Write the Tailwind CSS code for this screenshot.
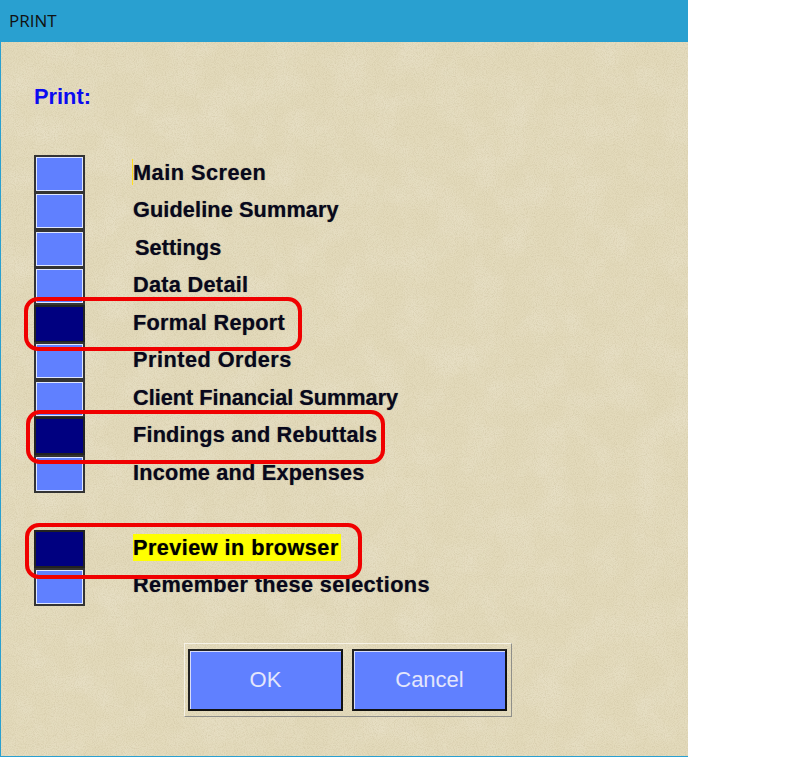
<!DOCTYPE html>
<html lang="en">
<head>
    <meta charset="UTF-8">
    <title>Print</title>
    <script src="https://cdn.jsdelivr.net/npm/@tailwindcss/browser@4"></script>
</head>
<body class="bg-white">
    <div class="w-[688px] h-[757px] flex flex-col bg-[#29a0d0] pl-px pb-px">
        <div class="h-[42px] shrink-0 pl-2 pt-[11px] text-[17px] leading-5 text-[#111] font-['Open_Sans',sans-serif]">PRINT</div>

        <div class="relative flex-1 bg-[#e3dabb] pl-[33px] font-['Liberation_Sans',sans-serif]">
            <!-- paper texture -->
            <svg class="absolute inset-0 w-full h-full" xmlns="http://www.w3.org/2000/svg">
                <filter id="blotch" x="0" y="0" width="100%" height="100%">
                    <feTurbulence type="fractalNoise" baseFrequency="0.03" numOctaves="4" seed="9"/>
                    <feColorMatrix values="0 0 0 0 0.85  0 0 0 0 0.8  0 0 0 0 0.66  0.8 0 0 0 -0.3"/>
                </filter>
                <filter id="grain" x="0" y="0" width="100%" height="100%">
                    <feTurbulence type="fractalNoise" baseFrequency="0.9" numOctaves="2" seed="4"/>
                    <feColorMatrix values="0 0 0 0 0.62  0 0 0 0 0.55  0 0 0 0 0.36  1.3 0 0 0 -0.52"/>
                </filter>
                <rect width="100%" height="100%" filter="url(#blotch)"/>
                <rect width="100%" height="100%" filter="url(#grain)"/>
            </svg>

            <div class="relative">
                <p class="pt-[43px] h-[112px] text-[21.8px] leading-6 font-bold text-[#0b0bf0]">Print:</p>

                <div class="grid grid-cols-[99px_1fr] auto-rows-[37.5px] text-[21.7px] leading-[26px] font-bold text-[#08081c] items-center [text-shadow:0_0_1px_#0008]">
                    <span class="w-[51px] h-[38px] translate-y-px border-2 border-[#333] bg-[#6080ff] outline outline-1 -outline-offset-3 outline-white/80"></span>
                    <span class="relative tracking-[0.5px]">Main Screen<i class="absolute left-[-1px] top-[-1px] w-px h-[26px] bg-yellow-300"></i></span>
                    <span class="w-[51px] h-[38px] translate-y-px border-2 border-[#333] bg-[#6080ff] outline outline-1 -outline-offset-3 outline-white/80"></span>
                    <span class="tracking-[0.12px]">Guideline Summary</span>
                    <span class="w-[51px] h-[38px] translate-y-px border-2 border-[#333] bg-[#6080ff] outline outline-1 -outline-offset-3 outline-white/80"></span>
                    <span class="pl-[2px] tracking-[0.1px]">Settings</span>
                    <span class="w-[51px] h-[38px] translate-y-px border-2 border-[#333] bg-[#6080ff] outline outline-1 -outline-offset-3 outline-white/80"></span>
                    <span class="tracking-[0.3px]">Data Detail</span>
                    <span class="w-[51px] h-[38px] translate-y-px border-2 border-[#222] bg-[#000080]"></span>
                    <span class="tracking-[0.3px]">Formal Report</span>
                    <span class="w-[51px] h-[38px] translate-y-px border-2 border-[#333] bg-[#6080ff] outline outline-1 -outline-offset-3 outline-white/80"></span>
                    <span class="tracking-[0.5px]">Printed Orders</span>
                    <span class="w-[51px] h-[38px] translate-y-px border-2 border-[#333] bg-[#6080ff] outline outline-1 -outline-offset-3 outline-white/80"></span>
                    <span>Client Financial Summary</span>
                    <span class="w-[51px] h-[38px] translate-y-px border-2 border-[#222] bg-[#000080]"></span>
                    <span class="tracking-[0.2px]">Findings and Rebuttals</span>
                    <span class="w-[51px] h-[38px] translate-y-px border-2 border-[#333] bg-[#6080ff] outline outline-1 -outline-offset-3 outline-white/80"></span>
                    <span class="tracking-[0.2px]">Income and Expenses</span>
                </div>

                <div class="mt-[37px] grid grid-cols-[99px_1fr] auto-rows-[37.5px] text-[21.7px] leading-[26px] font-bold text-[#08081c] items-center [text-shadow:0_0_1px_#0008]">
                    <span class="w-[51px] h-[38px] translate-y-[2px] border-2 border-[#222] bg-[#000080]"></span>
                    <span><span class="inline-block bg-[#ffff00] pr-[2px] pt-px tracking-[0.45px] text-black">Preview in browser</span></span>
                    <span class="w-[51px] h-[38px] translate-y-[2px] border-2 border-[#333] bg-[#6080ff] outline outline-1 -outline-offset-3 outline-white/80"></span>
                    <span class="tracking-[0.4px]">Remember these selections</span>
                </div>

                <div class="ml-[150px] mt-[39px] w-[328px] h-[74px] flex gap-[9px] pl-[3px] pt-[5px] border-[1.5px] border-t-[#f6f2e6] border-l-[#f6f2e6] border-r-[#8f8f8a] border-b-[#8f8f8a] box-border">
                    <button class="w-[155px] h-[62px] border-2 border-t-[#222] border-l-[#222] border-r-[#111] border-b-[#111] bg-[#6080ff] shadow-[inset_1px_1px_0_#d8dcf8] text-[22px] text-[#e4e6fb]">OK</button>
                    <button class="w-[155px] h-[62px] border-2 border-t-[#222] border-l-[#222] border-r-[#111] border-b-[#111] bg-[#6080ff] shadow-[inset_1px_1px_0_#d8dcf8] text-[22px] text-[#e4e6fb]">Cancel</button>
                </div>
            </div>
        </div>
    </div>

    <!-- red annotation boxes drawn over the screenshot -->
    <div class="absolute left-[24px] top-[297px] w-[278px] h-[54px] rounded-[14px] border-[4px] border-[#f00000]"></div>
    <div class="absolute left-[26px] top-[410px] w-[359px] h-[54px] rounded-[14px] border-[4px] border-[#f00000]"></div>
    <div class="absolute left-[25px] top-[523px] w-[337px] h-[56px] rounded-[14px] border-[4px] border-[#f00000]"></div>
</body>
</html>
